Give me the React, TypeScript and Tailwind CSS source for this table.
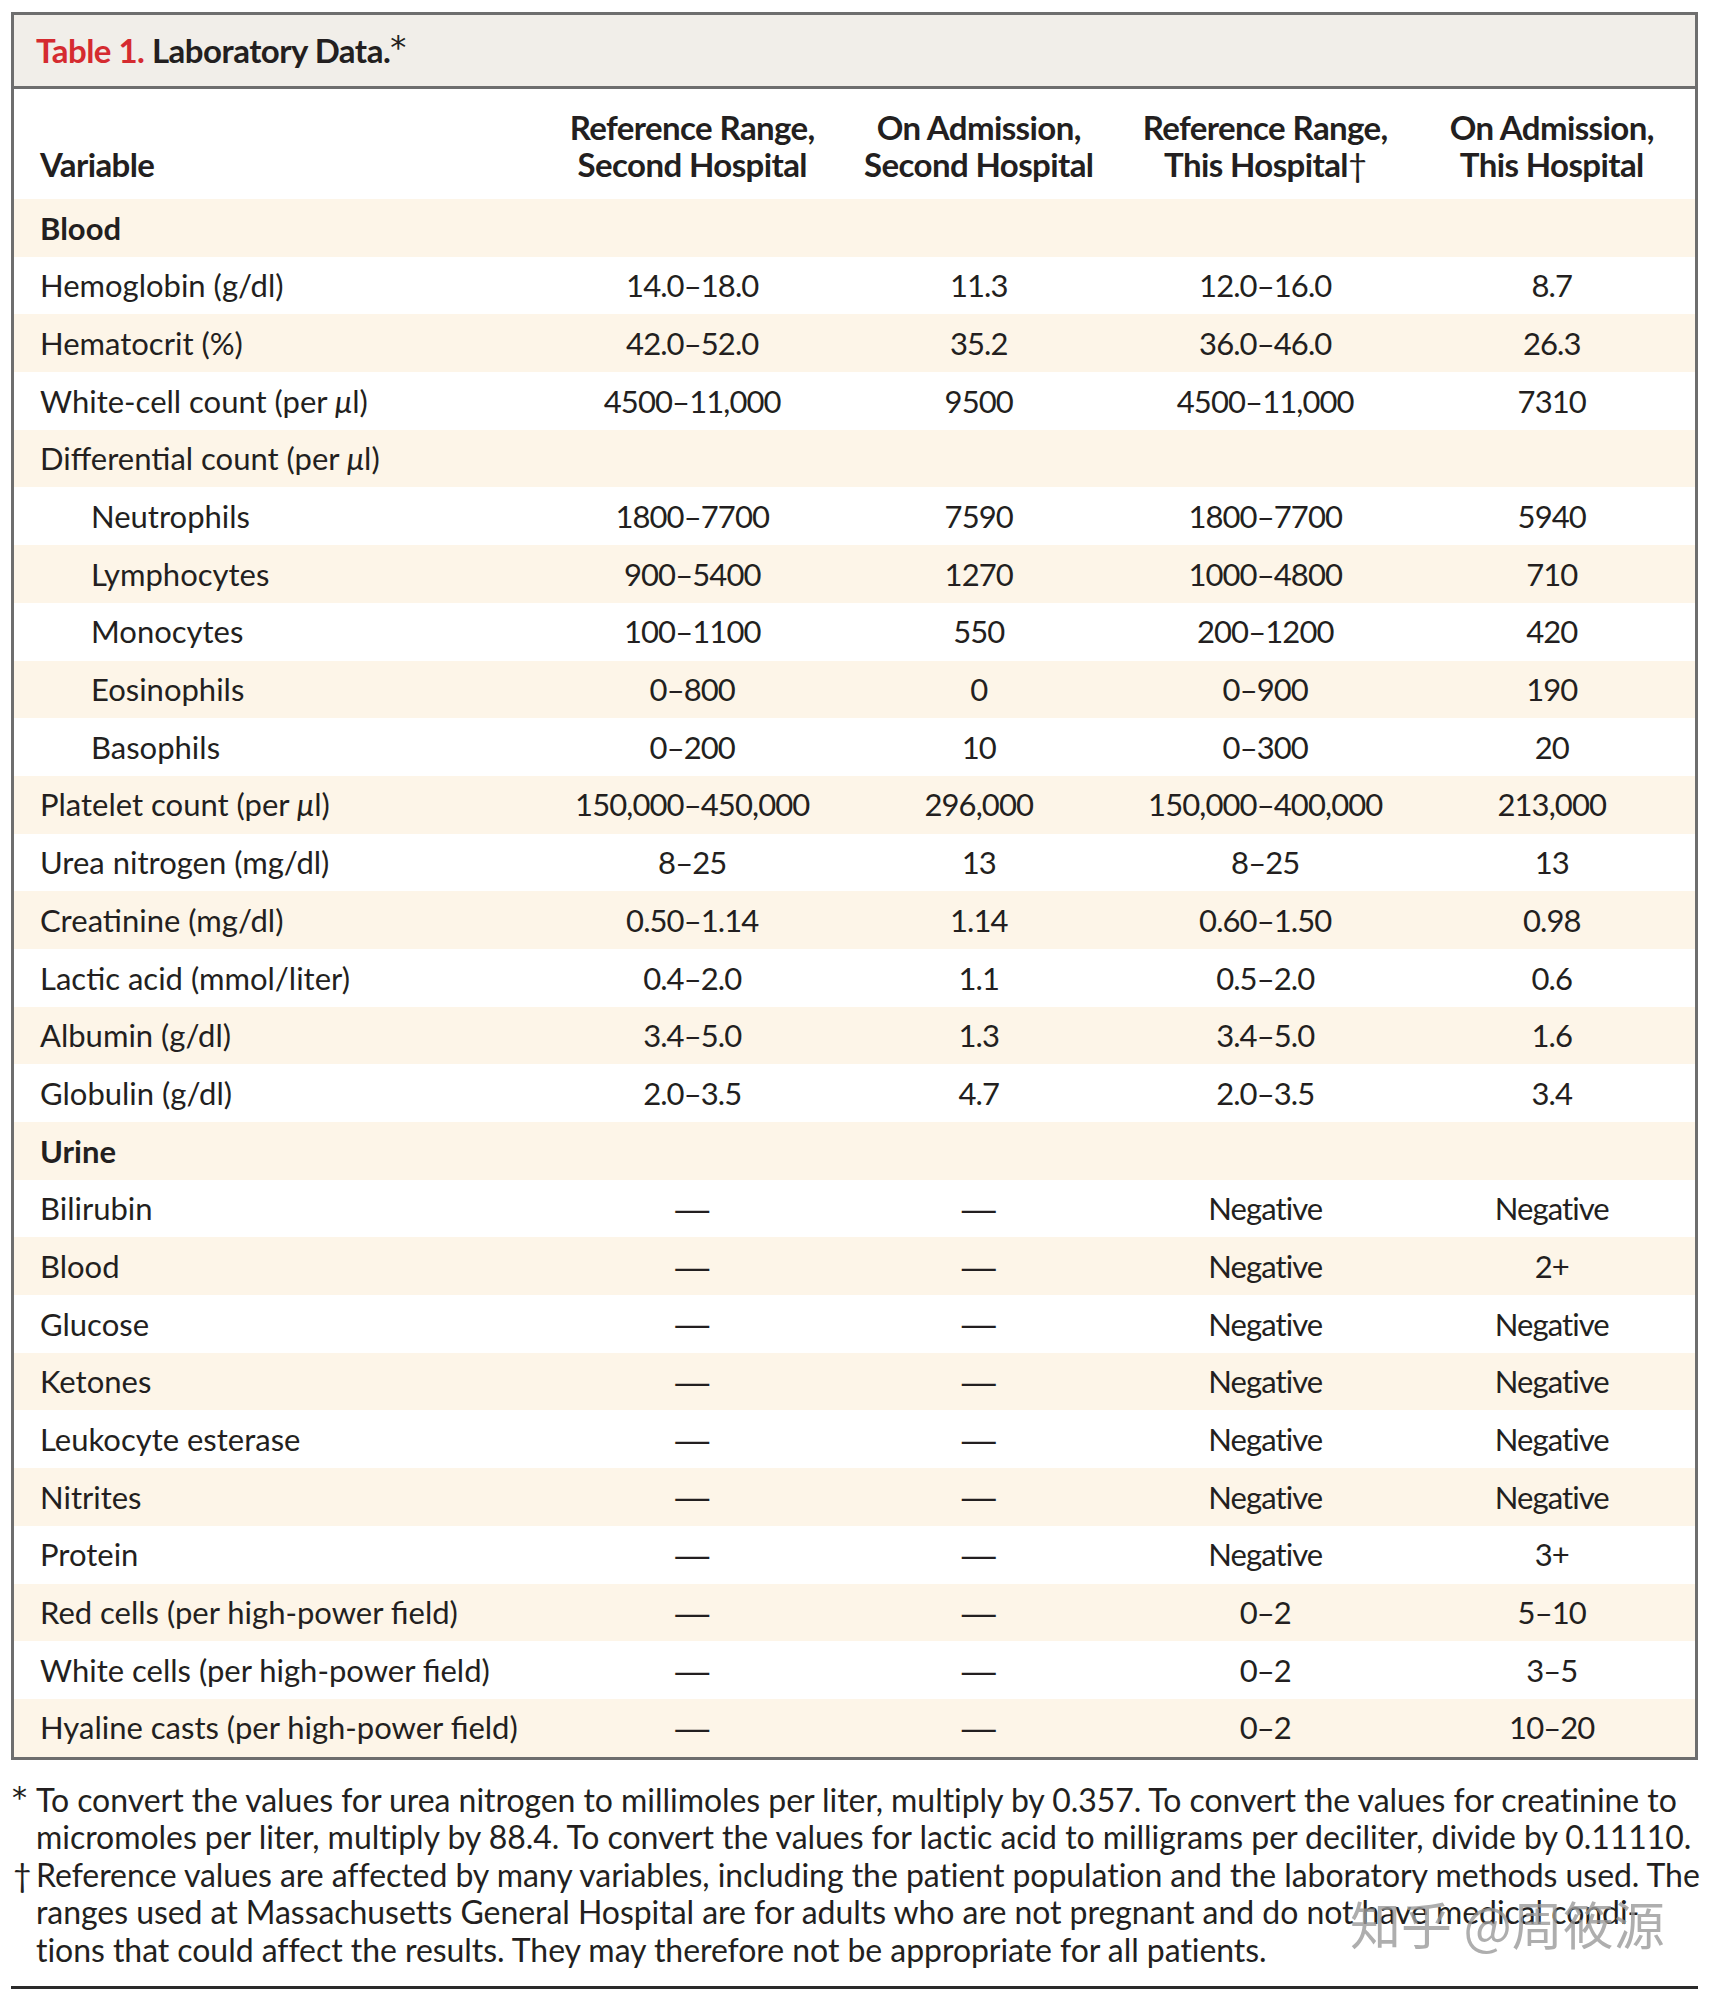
import React from "react";

type Row = { label: React.ReactNode; indent?: boolean; section?: boolean; vals?: string[] };

const mu = <i>μ</i>;
const D = "—";

const rows: Row[] = [
  { label: "Blood", section: true },
  { label: "Hemoglobin (g/dl)", vals: ["14.0–18.0", "11.3", "12.0–16.0", "8.7"] },
  { label: "Hematocrit (%)", vals: ["42.0–52.0", "35.2", "36.0–46.0", "26.3"] },
  { label: <>White-cell count (per {mu}l)</>, vals: ["4500–11,000", "9500", "4500–11,000", "7310"] },
  { label: <>Differential count (per {mu}l)</> },
  { label: "Neutrophils", indent: true, vals: ["1800–7700", "7590", "1800–7700", "5940"] },
  { label: "Lymphocytes", indent: true, vals: ["900–5400", "1270", "1000–4800", "710"] },
  { label: "Monocytes", indent: true, vals: ["100–1100", "550", "200–1200", "420"] },
  { label: "Eosinophils", indent: true, vals: ["0–800", "0", "0–900", "190"] },
  { label: "Basophils", indent: true, vals: ["0–200", "10", "0–300", "20"] },
  { label: <>Platelet count (per {mu}l)</>, vals: ["150,000–450,000", "296,000", "150,000–400,000", "213,000"] },
  { label: "Urea nitrogen (mg/dl)", vals: ["8–25", "13", "8–25", "13"] },
  { label: "Creatinine (mg/dl)", vals: ["0.50–1.14", "1.14", "0.60–1.50", "0.98"] },
  { label: "Lactic acid (mmol/liter)", vals: ["0.4–2.0", "1.1", "0.5–2.0", "0.6"] },
  { label: "Albumin (g/dl)", vals: ["3.4–5.0", "1.3", "3.4–5.0", "1.6"] },
  { label: "Globulin (g/dl)", vals: ["2.0–3.5", "4.7", "2.0–3.5", "3.4"] },
  { label: "Urine", section: true },
  { label: "Bilirubin", vals: [D, D, "Negative", "Negative"] },
  { label: "Blood", vals: [D, D, "Negative", "2+"] },
  { label: "Glucose", vals: [D, D, "Negative", "Negative"] },
  { label: "Ketones", vals: [D, D, "Negative", "Negative"] },
  { label: "Leukocyte esterase", vals: [D, D, "Negative", "Negative"] },
  { label: "Nitrites", vals: [D, D, "Negative", "Negative"] },
  { label: "Protein", vals: [D, D, "Negative", "3+"] },
  { label: "Red cells (per high-power field)", vals: [D, D, "0–2", "5–10"] },
  { label: "White cells (per high-power field)", vals: [D, D, "0–2", "3–5"] },
  { label: "Hyaline casts (per high-power field)", vals: [D, D, "0–2", "10–20"] },
];

const grid = "grid grid-cols-[535px_repeat(4,1fr)]";

export default function App() {
  return (
    <div className="relative w-[1711px] h-[2000px] bg-white text-[#231f20] font-['Lato','Noto_Sans',sans-serif]">
      <div className="pt-[12px] pl-[11px]">
        <div className="w-[1687px] border-[3px] border-[#6e6e6e]">
          {/* Title band */}
          <div className="h-[74px] bg-[#f1eee9] border-b-[3px] border-[#6e6e6e] flex items-center pl-[22px]">
            <span className="text-[33px] font-bold tracking-[-0.5px]">
              <span className="text-[#d52b30]">Table 1.</span> Laboratory Data.
              <span className="text-[32px] font-normal relative top-[-5px] font-['DejaVu_Sans',sans-serif]">*</span>
            </span>
          </div>
          {/* Column headers */}
          <div className={`${grid} h-[110px] items-end pb-[16px] text-[33px] font-bold leading-[37px] tracking-[-0.6px]`}>
            <div className="pl-[26px]">Variable</div>
            <div className="text-center">Reference Range,<br />Second Hospital</div>
            <div className="text-center">On Admission,<br />Second Hospital</div>
            <div className="text-center">Reference Range,<br />This Hospital<span className="font-normal">†</span></div>
            <div className="text-center">On Admission,<br />This Hospital</div>
          </div>
          {/* Body */}
          <div>
            {rows.map((r, i) => (
              <div
                key={i}
                className={`${grid} h-[57.7px] items-center text-[31px] ${i % 2 === 0 ? "bg-[#fdf5e8]" : "bg-white"}`}
              >
                <div className={`${r.indent ? "pl-[77px]" : "pl-[26px]"} ${r.section ? "font-bold" : ""} whitespace-nowrap`}>
                  {r.label}
                </div>
                {(r.vals ?? ["", "", "", ""]).map((v, j) =>
                  v === D ? (
                    <div key={j} className="text-center whitespace-nowrap font-['Liberation_Sans',sans-serif] text-[34px]">
                      {v}
                    </div>
                  ) : (
                    <div key={j} className="text-center whitespace-nowrap tracking-[-0.9px]">{v}</div>
                  )
                )}
              </div>
            ))}
          </div>
        </div>

        {/* Footnotes */}
        <div className="w-[1687px] pt-[21px] text-[32px] leading-[37.5px] tracking-[-0.05px]">
          <div className="flex">
            <div className="w-[25px] shrink-0 text-[30px] leading-[34px] pl-[1px] font-['DejaVu_Sans',sans-serif]">*</div>
            <div className="whitespace-nowrap">
              To convert the values for urea nitrogen to millimoles per liter, multiply by 0.357. To convert the values for creatinine to
              <br />
              micromoles per liter, multiply by 88.4. To convert the values for lactic acid to milligrams per deciliter, divide by 0.11110.
            </div>
          </div>
          <div className="flex">
            <div className="w-[25px] shrink-0 pl-[2px]">†</div>
            <div className="whitespace-nowrap">
              Reference values are affected by many variables, including the patient population and the laboratory methods used. The
              <br />
              ranges used at Massachusetts General Hospital are for adults who are not pregnant and do not have medical condi-
              <br />
              tions that could affect the results. They may therefore not be appropriate for all patients.
            </div>
          </div>
        </div>
        <div className="w-[1687px] mt-[18px] h-[3px] bg-[#2a2a2a]" />
      </div>

      {/* Watermark */}
      <div className="absolute left-[1350px] top-[1893px] text-[51px] leading-[60px] text-[#9a9a9a]/80 font-['Noto_Sans_CJK_SC','Noto_Sans',sans-serif] whitespace-nowrap">
        知乎 @周筱源
      </div>
    </div>
  );
}
